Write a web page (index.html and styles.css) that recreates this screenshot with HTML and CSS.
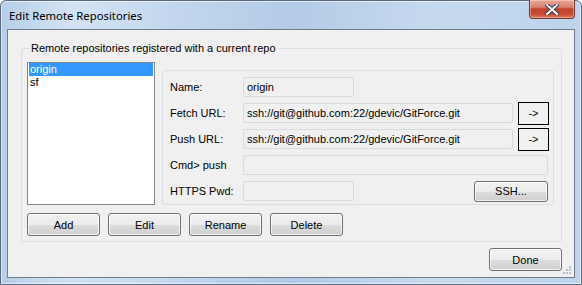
FILE: index.html
```html
<!DOCTYPE html>
<html lang="en">
<head>
    <meta charset="UTF-8">
    <title>Edit Remote Repositories</title>
    <link rel="stylesheet" href="styles.css">
</head>
<body>
    <div class="window">
        <div class="titlebar">
            <span class="title">Edit Remote Repositories</span>
            <div class="close-btn">
                <svg width="14" height="11" viewBox="0 0 14 11">
                    <path d="M2 1 L12 10 M12 1 L2 10" stroke="#3b4452" stroke-width="4" stroke-linecap="square"/>
                    <path d="M2 1 L12 10 M12 1 L2 10" stroke="#ffffff" stroke-width="2" stroke-linecap="square"/>
                </svg>
            </div>
        </div>

        <div class="client">
            <div class="group">
                <span class="group-title">Remote repositories registered with a current repo</span>

                <div class="group-body">
                    <ul class="listbox">
                        <li class="selected">origin</li>
                        <li>sf</li>
                    </ul>

                    <div class="panel">
                        <div class="row">
                            <label>Name:</label>
                            <div class="textbox short">origin</div>
                        </div>
                        <div class="row">
                            <label>Fetch URL:</label>
                            <div class="textbox url">ssh://git@github.com:22/gdevic/GitForce.git</div>
                            <div class="flat-btn">-&gt;</div>
                        </div>
                        <div class="row">
                            <label>Push URL:</label>
                            <div class="textbox url">ssh://git@github.com:22/gdevic/GitForce.git</div>
                            <div class="flat-btn">-&gt;</div>
                        </div>
                        <div class="row">
                            <label>Cmd&gt; push</label>
                            <div class="textbox wide"></div>
                        </div>
                        <div class="row">
                            <label>HTTPS Pwd:</label>
                            <div class="textbox short"></div>
                            <button class="btn ssh">SSH...</button>
                        </div>
                    </div>
                </div>

                <div class="actions">
                    <button class="btn">Add</button>
                    <button class="btn">Edit</button>
                    <button class="btn">Rename</button>
                    <button class="btn">Delete</button>
                </div>
            </div>

            <div class="footer">
                <button class="btn">Done</button>
            </div>

            <svg class="grip" width="9" height="9" viewBox="0 0 9 9">
                <rect x="6" y="0" width="2" height="2" fill="#b8bec6"/>
                <rect x="3" y="3" width="2" height="2" fill="#b8bec6"/>
                <rect x="6" y="3" width="2" height="2" fill="#b8bec6"/>
                <rect x="0" y="6" width="2" height="2" fill="#b8bec6"/>
                <rect x="3" y="6" width="2" height="2" fill="#b8bec6"/>
                <rect x="6" y="6" width="2" height="2" fill="#b8bec6"/>
            </svg>
        </div>
    </div>
</body>
</html>
```

FILE: styles.css
```css
* {
    margin: 0;
    padding: 0;
    box-sizing: border-box;
}

body {
    width: 582px;
    height: 285px;
    overflow: hidden;
    background: #ffffff;
    font-family: 'Liberation Sans', Arial, sans-serif;
    font-size: 11px;
    color: #000000;
}

.window {
    width: 582px;
    height: 285px;
    border: 1px solid #5b6b7d;
    border-radius: 6px 6px 0 0;
    background: linear-gradient(90deg, #b6cee8 0%, #d3e3f4 12%, #c2d7ee 30%, #b3cbe6 50%, #c6daef 75%, #bcd3eb 100%);
    box-shadow: inset 0 0 0 1px rgba(255, 255, 255, 0.55);
}

.titlebar {
    height: 28px;
    display: flex;
    justify-content: space-between;
    align-items: flex-start;
    padding-left: 8px;
}

.title {
    font-family: 'Noto Sans', 'Open Sans', sans-serif;
    font-size: 11.3px;
    line-height: 30px;
    color: #000000;
}

.close-btn {
    width: 46px;
    height: 19px;
    margin-right: 6px;
    margin-top: -1px;
    border: 1px solid #6d3a34;
    border-top: none;
    border-radius: 0 0 4px 4px;
    background: linear-gradient(180deg, #e9a99b 0%, #d8806d 40%, #c0432b 50%, #c94d33 80%, #dc7a5e 100%);
    box-shadow: inset 0 0 0 1px rgba(255, 220, 210, 0.45);
    display: flex;
    align-items: center;
    justify-content: center;
}

.client {
    position: relative;
    width: 568px;
    height: 249px;
    margin-left: 6px;
    border: 1px solid #6f7d8c;
    background: #f0f0f0;
    padding: 18px 12px 0 13px;
}

.group {
    width: 541px;
    height: 194px;
    border: 1px solid #d5dfe5;
    border-radius: 3px;
    padding: 13px 5px 0 5px;
}

.group-title {
    display: block;
    width: max-content;
    margin: -21px 0 0 2px;
    padding: 0 2px;
    background: #f0f0f0;
    line-height: 14px;
}

.group-body {
    display: flex;
    gap: 7px;
    margin-top: 7px;
}

.listbox {
    list-style: none;
    width: 128px;
    height: 143px;
    border: 1px solid #828790;
    background: #ffffff;
    padding: 0 1px;
}

.listbox li {
    height: 13px;
    line-height: 13px;
    padding-left: 1px;
}

.listbox li.selected {
    background: #3399ff;
    color: #ffffff;
}

.panel {
    width: 392px;
    height: 135px;
    margin-top: 8px;
    border: 1px solid #d5dfe5;
    border-radius: 3px;
    padding: 3px 0 0 7px;
}

.row {
    display: flex;
    align-items: center;
    height: 26px;
}

.row label {
    width: 73px;
    flex-shrink: 0;
}

.textbox {
    height: 20px;
    border: 1px solid #dadada;
    border-radius: 2px;
    background: #f0f0f0;
    padding-left: 3px;
    line-height: 18px;
    white-space: nowrap;
}

.textbox.short {
    width: 111px;
}

.textbox.url {
    width: 270px;
}

.textbox.wide {
    width: 305px;
}

.flat-btn {
    width: 31px;
    height: 23px;
    margin-left: 5px;
    border: 1px solid #000000;
    background: #f0f0f0;
    text-align: center;
    line-height: 21px;
}

.btn {
    width: 73px;
    height: 23px;
    border: 1px solid #707070;
    border-radius: 3px;
    background: linear-gradient(180deg, #f2f2f2 0%, #ebebeb 50%, #dddddd 51%, #cfcfcf 100%);
    box-shadow: inset 0 0 0 1px rgba(255, 255, 255, 0.7);
    font-family: 'Liberation Sans', Arial, sans-serif;
    font-size: 11px;
    color: #000000;
}

.btn.ssh {
    width: 74px;
    height: 21px;
    margin-left: auto;
    margin-right: 5px;
}

.actions {
    display: flex;
    gap: 8px;
    margin-top: 8px;
}

.footer {
    display: flex;
    justify-content: flex-end;
    margin-top: 6px;
}

.grip {
    position: absolute;
    right: 2px;
    bottom: 2px;
}
```
